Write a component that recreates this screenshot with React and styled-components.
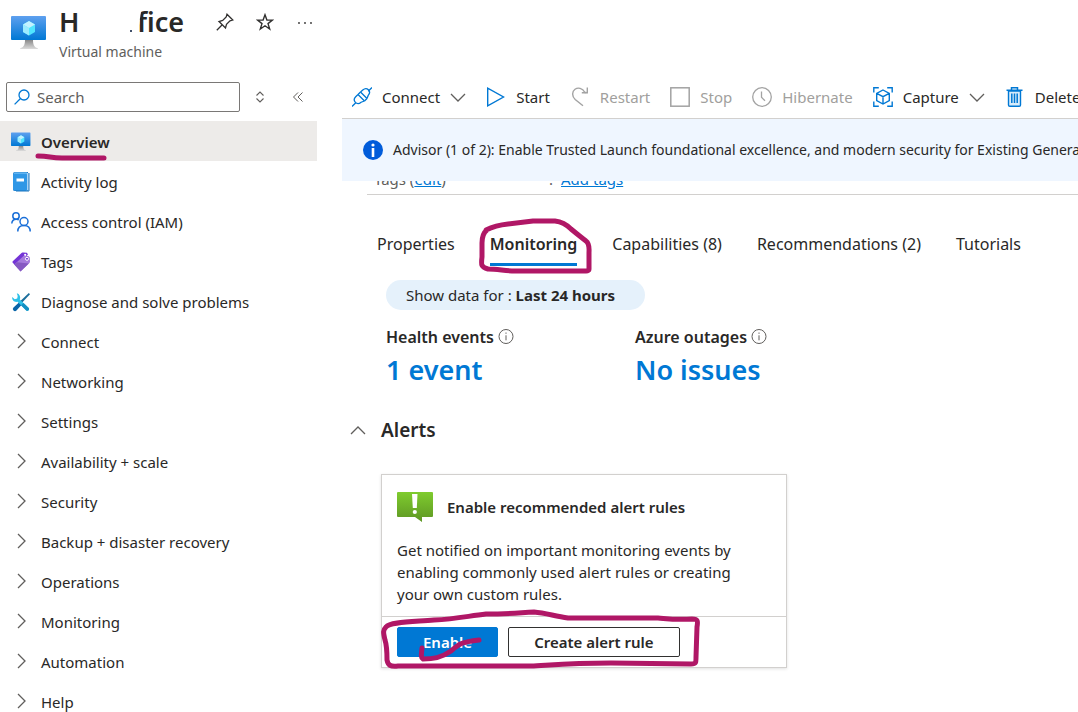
import React from "react"
import styled, { createGlobalStyle, css } from "styled-components"

const navItems = [
  { label: "Overview", icon: "vm", active: true },
  { label: "Activity log", icon: "log" },
  { label: "Access control (IAM)", icon: "people" },
  { label: "Tags", icon: "tag" },
  { label: "Diagnose and solve problems", icon: "tools" },
  { label: "Connect" },
  { label: "Networking" },
  { label: "Settings" },
  { label: "Availability + scale" },
  { label: "Security" },
  { label: "Backup + disaster recovery" },
  { label: "Operations" },
  { label: "Monitoring" },
  { label: "Automation" },
  { label: "Help" },
]

const commands = [
  { label: "Connect", icon: "plug", menu: true },
  { label: "Start", icon: "play" },
  { label: "Restart", icon: "restart", disabled: true },
  { label: "Stop", icon: "stop", disabled: true },
  { label: "Hibernate", icon: "clock", disabled: true },
  { label: "Capture", icon: "capture", menu: true },
  { label: "Delete", icon: "trash" },
]

const tabs = [
  "Properties",
  "Monitoring",
  "Capabilities (8)",
  "Recommendations (2)",
  "Tutorials",
]

const stats = [
  { label: "Health events", value: "1 event" },
  { label: "Azure outages", value: "No issues" },
]

const VmIcon = ({ size, id }) => (
  <svg width={size} height={size} viewBox="0 0 36 36" aria-hidden="true">
    <defs>
      <linearGradient id={`${id}-screen`} x1="0" y1="0" x2="0" y2="1">
        <stop offset="0" stopColor="#5ea0ef" />
        <stop offset="1" stopColor="#0078d4" />
      </linearGradient>
      <linearGradient id={`${id}-stand`} x1="0" y1="0" x2="0" y2="1">
        <stop offset="0" stopColor="#8a8a8a" />
        <stop offset="1" stopColor="#dcdcdc" />
      </linearGradient>
    </defs>
    <path
      d="M14 25h8c0 4 1 7 4 8 1 0 1 1 1 1H9s0-1 1-1c3-1 4-4 4-8z"
      fill={`url(#${id}-stand)`}
    />
    <rect x="0" y="1" width="35" height="24" rx="1" fill={`url(#${id}-screen)`} />
    <path d="M18 6l6 3.500v7.500L18 20.500 12 17V9.500z" fill="#50e6ff" />
    <path d="M18 6l6 3.500L18 13 12 9.500z" fill="#c3f1ff" />
    <path d="M18 13v7.500L12 17V9.500z" fill="#9cebff" />
  </svg>
)

const glyphs = {
  log: (
    <>
      <path d="M4 0h13v19H4a2 2 0 0 1-2-2V2a2 2 0 0 1 2-2z" fill="#0f6cbd" />
      <rect x="15" y="1" width="3" height="17.500" fill="#a9d3f5" />
      <path d="M18 1v18H5" fill="none" stroke="#1b74bd" />
      <rect x="2" y="1.500" width="14" height="17" rx="1" fill="#2f97e6" />
      <path d="M3.500.3h13L15.500 2H2.300z" fill="#5eb2ef" />
      <rect x="5.500" y="6.500" width="7.500" height="3" fill="#fff" />
    </>
  ),
  people: (
    <g fill="none" stroke="#1a6fd8" strokeWidth="1.500">
      <circle cx="5" cy="4" r="3.200" />
      <path d="M.8 11.500C1 8.500 3 7.200 5.500 7.300c1 0 1.700.3 2.300.7" />
      <circle cx="13" cy="9.500" r="4" />
      <path d="M6.800 19.500c0-4 2.700-6 6.200-6s6.200 2 6.200 6" />
    </g>
  ),
  tag: (
    <>
      <path
        d="M1.500 9.500L10.500 1c.5-.5 1-.6 1.800-.6l3.500.3 1.200 1.500L7 14 5.500 14.800 1.500 10.500z"
        fill="#7434d6"
      />
      <path
        d="M3.300 12.500L12.500 4c.5-.5 1-.6 1.700-.5l3.300.4 1.300 1.500.2 4c0 .7-.1 1-.6 1.500L9.500 19.500z"
        fill="#a67bdc"
      />
      <path d="M3.300 12.500l2.500-2.300 12 1.400-8.300 7.900z" fill="#8659c2" />
      <circle cx="14.200" cy="2.800" r="1.100" fill="#fff" />
      <circle cx="16" cy="6.800" r="1.500" fill="#7434d6" stroke="#fff" />
    </>
  ),
  tools: (
    <>
      <path d="M17.800 1l1.200 1.200-8.500 9-1.600-1.600z" fill="#1b6e9c" />
      <path d="M8.200 10.200l2.500 2.500-5.200 5.800a2 2 0 0 1-3-3z" fill="#0864a8" />
      <path
        d="M5.800 1.300a4.500 4.500 0 0 1 3 6.200l8.700 8.300c1.700 2-.8 4-2.500 2.500L6.500 9.800C3.500 10.500.8 8.300 1.200 5l2.500 2.200 2.500-.8.500-2.500z"
        fill="#2cc0e8"
      />
      <path d="M12.500 11l5 4.800c1.700 2-.8 4-2.500 2.500l-5-5z" fill="#1490c2" />
    </>
  ),
  plug: (
    <g fill="none" stroke="#0078d4" strokeWidth="1.300">
      <path d="M0 19.500l3.800-3.800M16.200 4.300L20 .5M8.500 5l6.500 6.500M6 7.500l6.500 6.500" />
      <path d="M8.500 5l2.300-2c2-1.800 4.300-1.500 5.600-.2s1.600 3.600-.2 5.600L15 11.500" />
      <path d="M6 7.500L3.700 9.800c-1.800 1.900-1.700 4.200-.3 5.600s3.700 1.600 5.700-.2l3.400-1.200" />
      <path d="M8.500 5L6 7.500M15 11.500L12.500 14" />
    </g>
  ),
  play: (
    <path
      d="M1.700 1.200v17.600L17.500 10z"
      fill="none"
      stroke="#0078d4"
      strokeWidth="1.400"
    />
  ),
  restart: (
    <g fill="none" stroke="#a3a3a3" strokeWidth="1.400">
      <path d="M13 18.800L5.200 12.500C1.600 9.200 2 4.500 5 2.300c3-2.200 7.300-1.400 10 3.200l1.500 0" />
      <path d="M17.300.5v5.200h-5.500" />
    </g>
  ),
  stop: (
    <rect
      x=".8"
      y=".8"
      width="18.400"
      height="18.400"
      fill="none"
      stroke="#a3a3a3"
      strokeWidth="1.500"
    />
  ),
  clock: (
    <g fill="none" stroke="#a3a3a3" strokeWidth="1.300">
      <circle cx="10" cy="10" r="9.300" />
      <path d="M9.500 4.500v5.800l3.500 3.500" />
    </g>
  ),
  capture: (
    <g fill="none" stroke="#0078d4" strokeWidth="1.400">
      <path d="M.8 5.500V.8h5M14.200.8h5v4.700M19.200 14.500v4.700h-5M5.800 19.200h-5v-4.700" />
      <path d="M10 3l6.300 3.300v7.400L10 17l-6.300-3.300V6.300zM3.700 6.300L10 9.700l6.300-3.400M10 9.700V17" />
    </g>
  ),
  trash: (
    <>
      <path
        d="M3.500 4h12v14a1.300 1.300 0 0 1-1.300 1.300H4.800A1.300 1.300 0 0 1 3.500 18z"
        fill="#d7ecfb"
        stroke="#0078d4"
        strokeWidth="1.400"
      />
      <path
        d="M1.500 3.300h16M6.500 3V.8h6V3M6.800 6.500v9.500M9.500 6.500v9.500M12.200 6.500v9.500"
        fill="none"
        stroke="#0078d4"
        strokeWidth="1.500"
      />
    </>
  ),
}

const Glyph = ({ name }) => (
  <svg width="20" height="20" viewBox="0 0 20 20" aria-hidden="true">
    {glyphs[name]}
  </svg>
)

const chevronPaths = {
  right: "M5 1l7 7-7 7",
  down: "M1 5l7 7 7-7",
  up: "M1 12l7-7 7 7",
}

const Chevron = ({ to }) => (
  <svg width="16" height="16" viewBox="0 0 16 16" aria-hidden="true">
    <path d={chevronPaths[to]} fill="none" stroke="#605e5c" strokeWidth="1.300" />
  </svg>
)

const PinIcon = () => (
  <svg width="18" height="18" viewBox="0 0 18 18" aria-hidden="true">
    <path
      d="M.8 17.200L6 12M3 8.500l6.500 6.500 1-3.700 3.500-3.500 2.800-.8L11 1.200l-.8 2.800-3.500 3.500z"
      fill="none"
      stroke="#323130"
      strokeWidth="1.300"
    />
  </svg>
)

const StarIcon = () => (
  <svg width="18" height="18" viewBox="0 0 18 18" aria-hidden="true">
    <path
      d="M9 1.800l1.900 5.300h5.600l-4.500 3.500 1.700 5.500L9 12.800l-4.700 3.300L6 10.600 1.500 7.100h5.600z"
      fill="none"
      stroke="#323130"
      strokeWidth="1.400"
    />
  </svg>
)

const MoreIcon = () => (
  <svg width="18" height="18" viewBox="0 0 18 18" aria-hidden="true">
    <g fill="#323130">
      <circle cx="3" cy="10" r=".9" />
      <circle cx="9" cy="10" r=".9" />
      <circle cx="15" cy="10" r=".9" />
    </g>
  </svg>
)

const SearchIcon = () => (
  <svg width="16" height="16" viewBox="0 0 16 16" aria-hidden="true">
    <g fill="none" stroke="#0078d4" strokeWidth="1.300">
      <circle cx="10" cy="6" r="5" />
      <path d="M6.500 9.500L.6 15.400" />
    </g>
  </svg>
)

const SortIcon = () => (
  <svg width="10" height="12" viewBox="0 0 10 12" aria-hidden="true">
    <path
      d="M1.500 4.500L5 1l3.500 3.500M1.500 7.500L5 11l3.500-3.500"
      fill="none"
      stroke="#605e5c"
      strokeWidth="1.100"
    />
  </svg>
)

const CollapseIcon = () => (
  <svg width="12" height="12" viewBox="0 0 12 12" aria-hidden="true">
    <path
      d="M6 1.500L1.500 6 6 10.500M10.500 1.500L6 6l4.500 4.500"
      fill="none"
      stroke="#605e5c"
      strokeWidth="1"
    />
  </svg>
)

const InfoBadge = () => (
  <svg width="20" height="20" viewBox="0 0 20 20" aria-hidden="true">
    <circle cx="10" cy="10" r="10" fill="#015cda" />
    <circle cx="10" cy="5" r="1.600" fill="#fff" />
    <rect x="8.700" y="8" width="2.600" height="9" fill="#fff" />
  </svg>
)

const InfoIcon = () => (
  <svg width="16" height="16" viewBox="0 0 16 16" aria-hidden="true">
    <circle cx="8" cy="7.500" r="7" fill="none" stroke="#605e5c" />
    <path d="M8 6.300v5M8 3.500v1.300" stroke="#605e5c" />
  </svg>
)

const AlertIcon = () => (
  <svg width="36" height="30" viewBox="0 0 36 30" aria-hidden="true">
    <defs>
      <linearGradient id="alert-fill" x1="0" y1="0" x2="0" y2="1">
        <stop offset="0" stopColor="#7fcc2e" />
        <stop offset="1" stopColor="#5e9624" />
      </linearGradient>
    </defs>
    <path
      d="M1 0h34a1 1 0 0 1 1 1v23a1 1 0 0 1-1 1H25v5l-7-5H1a1 1 0 0 1-1-1V1a1 1 0 0 1 1-1z"
      fill="url(#alert-fill)"
    />
    <path d="M15 2h5.500l-.7 14h-4z" fill="#fff" />
    <circle cx="17.800" cy="20" r="2.100" fill="#fff" />
  </svg>
)

const App = () => (
  <>
    <GlobalStyle />
    <Page>
      <Header>
        <VmIcon size={36} id="head" />
        <Heading>
          <TitleRow>
            <Title>
              <span>H</span>
              <TitleDot />
              <TitleEnd>fice</TitleEnd>
            </Title>
            <IconButton aria-label="Pin"><PinIcon /></IconButton>
            <IconButton aria-label="Favorite"><StarIcon /></IconButton>
            <IconButton aria-label="More"><MoreIcon /></IconButton>
          </TitleRow>
          <Subtitle>Virtual machine</Subtitle>
        </Heading>
      </Header>
      <Columns>
        <Sidebar>
          <SearchRow>
            <SearchBox>
              <SearchIcon />
              <SearchInput placeholder="Search" aria-label="Search" />
            </SearchBox>
            <IconButton aria-label="Expand all"><SortIcon /></IconButton>
            <IconButton aria-label="Collapse menu"><CollapseIcon /></IconButton>
          </SearchRow>
          <nav>
            {navItems.map(({ label, icon, active }) => (
              <NavLink href="#" key={label} $active={active}>
                <NavIcon $chevron={!icon}>
                  {icon === "vm" && <VmIcon size={20} id="nav" />}
                  {icon && icon !== "vm" && <Glyph name={icon} />}
                  {!icon && <Chevron to="right" />}
                </NavIcon>
                {label}
                {active && (
                  <NavMark viewBox="0 0 76 10" aria-hidden="true">
                    <path d="M4 3c12 0 12 2 24 2h42" />
                  </NavMark>
                )}
              </NavLink>
            ))}
          </nav>
        </Sidebar>
        <Main>
          <Toolbar>
            {commands.map(({ label, icon, menu, disabled }) => (
              <Command key={label} disabled={disabled}>
                <Glyph name={icon} />
                {label}
                {menu && <Chevron to="down" />}
              </Command>
            ))}
          </Toolbar>
          <Banner>
            <InfoBadge />
            <span>
              Advisor (1 of 2): Enable Trusted Launch foundational excellence, and
              modern security for Existing Generation
            </span>
          </Banner>
          <Content>
            <TagsRow>
              <TagsLabel>
                Tags (<a href="#">edit</a>)
              </TagsLabel>
              <TagsValue>
                : <a href="#">Add tags</a>
              </TagsValue>
            </TagsRow>
            <Tabs role="tablist">
              {tabs.map((tab) => (
                <Tab
                  key={tab}
                  role="tab"
                  aria-selected={tab === "Monitoring"}
                  $active={tab === "Monitoring"}
                >
                  {tab}
                  {tab === "Monitoring" && (
                    <TabMark viewBox="0 0 116 58" aria-hidden="true">
                      <path d="M9 13c8-4 12-5 22-6l25-3h22c8 1 12 4 16 8 6 5 10 8 15 12 4 3 3 8 3 12v16c0 2-2 2-6 2H38c-10 0-17-2-27-2-7-2-7-4-6-12V26c0-5 1-10 5-13z" />
                    </TabMark>
                  )}
                </Tab>
              ))}
            </Tabs>
            <Overview>
              <Pill>
                Show data for : <strong>Last 24 hours</strong>
              </Pill>
              <Stats>
                {stats.map(({ label, value }) => (
                  <div key={label}>
                    <StatLabel>
                      {label}
                      <InfoIcon />
                    </StatLabel>
                    <StatValue href="#">{value}</StatValue>
                  </div>
                ))}
              </Stats>
            </Overview>
            <SectionHeader>
              <Chevron to="up" />
              Alerts
            </SectionHeader>
            <Card>
              <CardBody>
                <CardTitle>
                  <AlertIcon />
                  Enable recommended alert rules
                </CardTitle>
                <CardText>
                  Get notified on important monitoring events by enabling commonly
                  used alert rules or creating your own custom rules.
                </CardText>
              </CardBody>
              <CardActions>
                <Button $primary>Enable</Button>
                <Button>Create alert rule</Button>
                <ActionsMark viewBox="0 0 320 62" aria-hidden="true">
                  <path d="M6 18c4-5 22-5 48-7 22-1 34-4 52-6 22 0 30-1 48-2 12 1 20 4 34 6h90c12 1 18 2 34 1 6 0 6 2 5 8l-1 30c0 6 0 7-5 7l-80-1c-40 0-60 2-80 3H18c-8 1-10-1-11-6 0-10 0-14-2-20-2-8-2-10 1-13z" />
                  <path d="M42 39c-1 8-1 10 1 11 10 0 18-1 28-8 8-7 10-9 28-11" />
                </ActionsMark>
              </CardActions>
            </Card>
          </Content>
        </Main>
      </Columns>
    </Page>
  </>
)

const GlobalStyle = createGlobalStyle`
  * {
    box-sizing: border-box;
  }
  body {
    margin: 0;
    background: #fff;
    color: #292827;
    font-family: "Noto Sans", "Open Sans", sans-serif;
    font-size: 15px;
    line-height: 20px;
  }
  button, input {
    font: inherit;
    color: inherit;
  }
  a {
    color: #0078d4;
  }
  svg {
    flex: none;
  }
`

const Page = styled.div`
  display: flex;
  flex-direction: column;
  height: 100vh;
  overflow: hidden;
`

const Header = styled.header`
  display: flex;
  gap: 12px;
  height: 82px;
  padding: 4px 11px;

  > svg {
    margin-top: 11px;
  }
`

const Heading = styled.div`
  display: flex;
  flex-direction: column;
`

const TitleRow = styled.div`
  display: flex;
  align-items: center;
  gap: 4px;
  height: 36px;
`

const Title = styled.h1`
  display: flex;
  width: 125px;
  margin: 0 19px 0 0;
  font-size: 27px;
  font-weight: 600;
  line-height: 36px;
`

const TitleDot = styled.span`
  width: 2px;
  height: 2px;
  margin: 26px 5px 0 auto;
  background: #41506b;
`

const TitleEnd = styled.span`
  clip-path: polygon(5px 0, 100% 0, 100% 100%, 0 100%);
`

const IconButton = styled.button`
  display: flex;
  align-items: center;
  justify-content: center;
  width: 36px;
  height: 30px;
  padding: 0;
  border: 0;
  background: none;
`

const Subtitle = styled.div`
  color: #605e5c;
  font-size: 14px;
  line-height: 24px;
`

const Columns = styled.div`
  display: grid;
  grid-template-columns: 317px minmax(0, 1fr);
  gap: 25px;
  flex: 1;
  min-height: 0;
`

const Sidebar = styled.aside`
  overflow: hidden;
`

const SearchRow = styled.div`
  display: flex;
  align-items: center;
  gap: 2px;
  padding: 0 0 9px 6px;
`

const SearchBox = styled.div`
  display: flex;
  align-items: center;
  gap: 7px;
  width: 234px;
  height: 30px;
  padding: 0 7px;
  border: 1px solid #7a7876;
  border-radius: 2px;
`

const SearchInput = styled.input`
  flex: 1;
  min-width: 0;
  padding: 0;
  border: 0;
  outline: 0;
  background: none;

  &::placeholder {
    color: #605e5c;
    opacity: 1;
  }
`

const NavLink = styled.a`
  position: relative;
  display: flex;
  align-items: center;
  gap: 10px;
  height: 40px;
  padding: 2px 11px 0;
  color: #292827;
  text-decoration: none;
  background: ${({ $active }) => ($active ? "#edebe9" : "none")};
  font-weight: ${({ $active }) => ($active ? 600 : 400)};
`

const NavIcon = styled.span`
  display: flex;
  justify-content: center;
  width: 20px;
  padding-bottom: ${({ $chevron }) => ($chevron ? "2px" : "0")};
`

const inkMark = css`
  position: absolute;
  overflow: visible;
  pointer-events: none;
  fill: none;
  stroke: #b01766;
  stroke-width: 5px;
  stroke-linecap: round;
  stroke-linejoin: round;
`

const NavMark = styled.svg`
  ${inkMark}
  left: 34px;
  bottom: -2px;
  width: 76px;
  height: 10px;
`

const Main = styled.main`
  display: flex;
  flex-direction: column;
  overflow: hidden;
`

const Toolbar = styled.div`
  display: flex;
  gap: 20px;
  height: 37px;
  padding: 0 10px 6px;
  border-bottom: 1px solid #d2d0ce;
`

const Command = styled.button`
  display: flex;
  flex: none;
  align-items: center;
  gap: 10px;
  height: 30px;
  padding: 0;
  border: 0;
  background: none;
  color: ${({ disabled }) => (disabled ? "#a19f9d" : "#292827")};
`

const Banner = styled.div`
  display: flex;
  flex: none;
  align-items: center;
  gap: 10px;
  height: 62px;
  padding: 0 21px;
  background: #eff6ff;
  font-size: 14px;
  white-space: nowrap;
`

const Content = styled.div`
  flex: 1;
  min-height: 0;
  overflow: hidden;
`

/* scrolled partly under the banner */
const TagsRow = styled.div`
  display: flex;
  margin: -12px 0 0 25px;
  padding: 0 7px 5px;
  border-bottom: 1px solid #d2d0ce;
  color: #605e5c;
`

const TagsLabel = styled.span`
  width: 175px;
`

const TagsValue = styled.span`
  display: flex;
  gap: 8px;
`

const Tabs = styled.div`
  display: flex;
  gap: 35px;
  padding: 33px 0 0 35px;
  font-size: 16px;
`

const Tab = styled.button`
  position: relative;
  flex: none;
  height: 38px;
  padding: 0 0 4px;
  border: 0;
  border-bottom: 3px solid ${({ $active }) => ($active ? "#0078d4" : "transparent")};
  background: none;
  font-weight: ${({ $active }) => ($active ? 600 : 400)};
`

const TabMark = styled.svg`
  ${inkMark}
  left: -13px;
  top: -11px;
  width: 116px;
  height: 58px;
`

const Overview = styled.div`
  padding: 14px 0 0 44px;
`

const Pill = styled.button`
  min-width: 259px;
  height: 30px;
  padding: 0 20px;
  border: 0;
  border-radius: 15px;
  background: #e5f1fb;
  text-align: left;
`

const Stats = styled.div`
  display: grid;
  grid-template-columns: 249px 249px;
  padding-top: 15px;
`

const StatLabel = styled.div`
  display: flex;
  align-items: center;
  gap: 4px;
  height: 24px;
  font-size: 16px;
  font-weight: 600;
`

const StatValue = styled.a`
  display: block;
  font-size: 27px;
  font-weight: 600;
  line-height: 42px;
  text-decoration: none;
`

const SectionHeader = styled.h2`
  display: flex;
  align-items: center;
  gap: 15px;
  margin: 25px 0 0 8px;
  font-size: 19px;
  font-weight: 600;
  line-height: 28px;
`

const Card = styled.section`
  width: 406px;
  margin: 30px 0 0 39px;
  border: 1px solid #d2d0ce;
  box-shadow: 0 1px 3px rgba(0, 0, 0, 0.12);
`

const CardBody = styled.div`
  padding: 17px 40px 11px 15px;
`

const CardTitle = styled.h3`
  display: flex;
  align-items: center;
  gap: 14px;
  margin: 0;
  font-size: 15px;
  font-weight: 600;
`

const CardText = styled.p`
  margin: 17px 0 0;
  line-height: 22px;
`

const CardActions = styled.div`
  position: relative;
  display: flex;
  gap: 10px;
  padding: 10px 15px;
  border-top: 1px solid #d2d0ce;
`

const Button = styled.button`
  height: 30px;
  padding: 0 25px;
  border: 1px solid ${({ $primary }) => ($primary ? "#0078d4" : "#323130")};
  border-radius: 2px;
  background: ${({ $primary }) => ($primary ? "#0078d4" : "#fff")};
  color: ${({ $primary }) => ($primary ? "#fff" : "#292827")};
  font-weight: 600;
`

const ActionsMark = styled.svg`
  ${inkMark}
  left: -2px;
  top: -8px;
  width: 320px;
  height: 62px;
`

export default App
